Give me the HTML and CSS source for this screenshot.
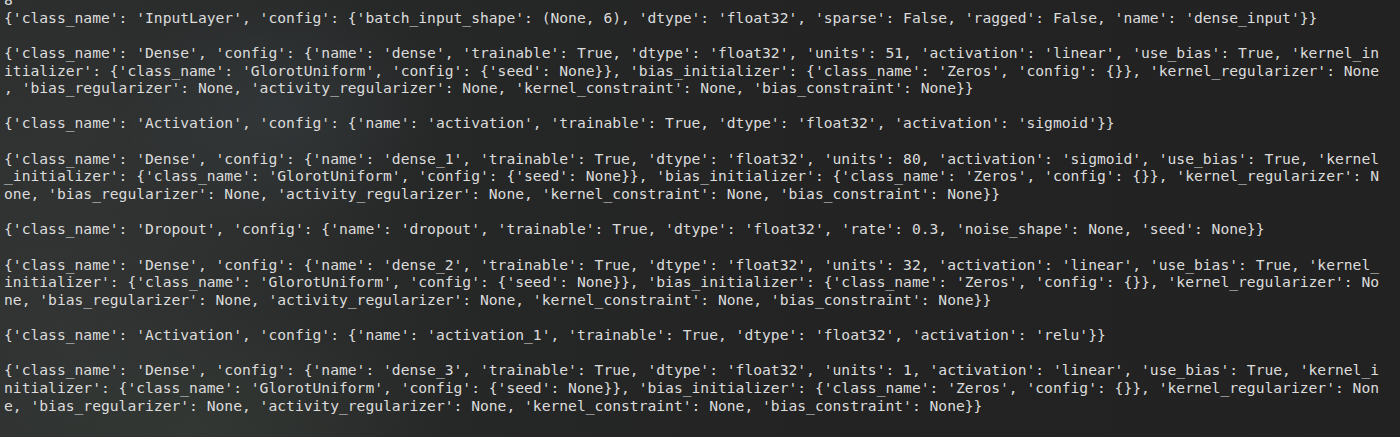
FILE: index.html
```html
<!DOCTYPE html>
<html>
<head>
<meta charset="utf-8">
<link rel="stylesheet" href="styles.css">
</head>
<body>
<main class="terminal">
<pre class="output">8
{'class_name': 'InputLayer', 'config': {'batch_input_shape': (None, 6), 'dtype': 'float32', 'sparse': False, 'ragged': False, 'name': 'dense_input'}}

{'class_name': 'Dense', 'config': {'name': 'dense', 'trainable': True, 'dtype': 'float32', 'units': 51, 'activation': 'linear', 'use_bias': True, 'kernel_in
itializer': {'class_name': 'GlorotUniform', 'config': {'seed': None}}, 'bias_initializer': {'class_name': 'Zeros', 'config': {}}, 'kernel_regularizer': None
, 'bias_regularizer': None, 'activity_regularizer': None, 'kernel_constraint': None, 'bias_constraint': None}}

{'class_name': 'Activation', 'config': {'name': 'activation', 'trainable': True, 'dtype': 'float32', 'activation': 'sigmoid'}}

{'class_name': 'Dense', 'config': {'name': 'dense_1', 'trainable': True, 'dtype': 'float32', 'units': 80, 'activation': 'sigmoid', 'use_bias': True, 'kernel
_initializer': {'class_name': 'GlorotUniform', 'config': {'seed': None}}, 'bias_initializer': {'class_name': 'Zeros', 'config': {}}, 'kernel_regularizer': N
one, 'bias_regularizer': None, 'activity_regularizer': None, 'kernel_constraint': None, 'bias_constraint': None}}

{'class_name': 'Dropout', 'config': {'name': 'dropout', 'trainable': True, 'dtype': 'float32', 'rate': 0.3, 'noise_shape': None, 'seed': None}}

{'class_name': 'Dense', 'config': {'name': 'dense_2', 'trainable': True, 'dtype': 'float32', 'units': 32, 'activation': 'linear', 'use_bias': True, 'kernel_
initializer': {'class_name': 'GlorotUniform', 'config': {'seed': None}}, 'bias_initializer': {'class_name': 'Zeros', 'config': {}}, 'kernel_regularizer': No
ne, 'bias_regularizer': None, 'activity_regularizer': None, 'kernel_constraint': None, 'bias_constraint': None}}

{'class_name': 'Activation', 'config': {'name': 'activation_1', 'trainable': True, 'dtype': 'float32', 'activation': 'relu'}}

{'class_name': 'Dense', 'config': {'name': 'dense_3', 'trainable': True, 'dtype': 'float32', 'units': 1, 'activation': 'linear', 'use_bias': True, 'kernel_i
nitializer': {'class_name': 'GlorotUniform', 'config': {'seed': None}}, 'bias_initializer': {'class_name': 'Zeros', 'config': {}}, 'kernel_regularizer': Non
e, 'bias_regularizer': None, 'activity_regularizer': None, 'kernel_constraint': None, 'bias_constraint': None}}</pre>
</main>
</body>
</html>
```

FILE: styles.css
```css
html, body {
  margin: 0;
  padding: 0;
  height: 100%;
  overflow: hidden;
}

body {
  background: #222222;
}

.terminal {
  height: 437px;
  overflow: hidden;
  background:
    radial-gradient(ellipse 160px 120px at 280px 110px, rgba(62, 72, 78, 0.35), rgba(62, 72, 78, 0) 100%),
    radial-gradient(ellipse 260px 120px at 200px 430px, rgba(58, 68, 58, 0.4), rgba(58, 68, 58, 0) 100%),
    radial-gradient(ellipse 420px 260px at 60px 330px, rgba(62, 66, 64, 0.4), rgba(62, 66, 64, 0) 100%),
    radial-gradient(ellipse 380px 220px at 80px 120px, rgba(60, 64, 62, 0.3), rgba(60, 64, 62, 0) 100%),
    linear-gradient(to right, #2a2c2c 0%, #262727 30%, #232323 60%, #222222 100%);
}

.output {
  margin: -9px 0 0 0;
  padding: 0 0 0 4px;
  font-family: "DejaVu Sans Mono", "Liberation Mono", monospace;
  font-size: 14.65px;
  line-height: 17.64px;
  color: #dcdcdc;
  white-space: pre;
}
```
